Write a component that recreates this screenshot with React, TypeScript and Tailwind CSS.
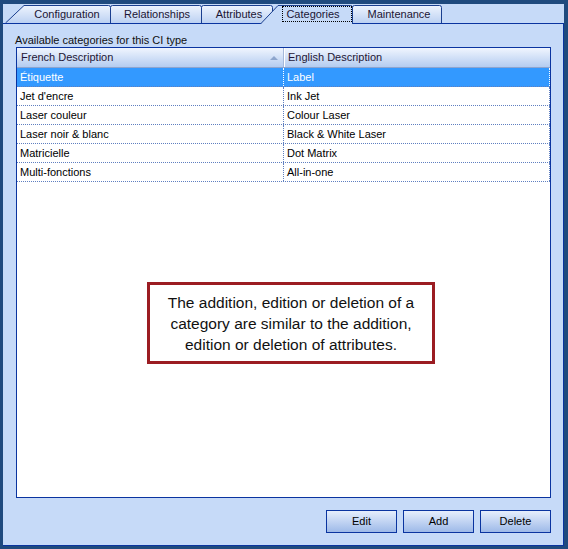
import React from "react";

type TabProps = {
    label: string;
    w: number;
    slant?: number;
    selected?: boolean;
    className?: string;
    labelClass?: string;
};

// tab shape is drawn, label stays as real text
function Tab({ label, w, slant = 0, selected = false, className = "", labelClass = "" }: TabProps) {
    const gid = `tabg-${label}`;
    const bottom = selected ? 20 : 19;
    const left = slant
        ? `M0.5 ${bottom} L${slant} 1.5`
        : `M0.5 ${bottom} V3.5 Q0.5 1.5 2.5 1.5`;
    const d = `${left} H${w - 2.5} Q${w - 0.5} 1.5 ${w - 0.5} 3.5 V${bottom}`;

    return (
        <div className={`relative h-[19px] shrink-0 ${selected ? "z-10" : ""} ${className}`}>
            <svg className="absolute left-0 top-0 overflow-visible" width={w} height={19} viewBox={`0 0 ${w} 19`}>
                <defs>
                    <linearGradient id={gid} x1="0" y1="0" x2="0" y2="1">
                        <stop offset="0" stopColor="#eef4fe" />
                        <stop offset="1" stopColor="#bcd1f2" />
                    </linearGradient>
                </defs>
                <path d={d} fill={selected ? "#c6daf8" : `url(#${gid})`} stroke="#1a3f8f" strokeWidth="1" />
            </svg>
            <div className={`relative flex h-full items-center justify-center pt-[2px] text-[11px] text-[#1b1535] ${labelClass}`}>
                {label}
            </div>
            {selected && (
                <div className="absolute left-[22px] right-[1px] top-[2px] bottom-[1px] border border-dotted border-black" />
            )}
        </div>
    );
}

const rows = [
    { fr: "Étiquette", en: "Label" },
    { fr: "Jet d'encre", en: "Ink Jet" },
    { fr: "Laser couleur", en: "Colour Laser" },
    { fr: "Laser noir & blanc", en: "Black & White Laser" },
    { fr: "Matricielle", en: "Dot Matrix" },
    { fr: "Multi-fonctions", en: "All-in-one" },
];

function Button({ children }: { children: React.ReactNode }) {
    return (
        <button className="flex h-[23px] w-[71px] items-center justify-center border border-[#0a34a0] bg-gradient-to-b from-[#e6eefc] to-[#9ebae8] text-[11px] text-black">
            {children}
        </button>
    );
}

export default function App() {
    return (
        <div
            className="flex h-[549px] w-[568px] flex-col bg-[#1f4a7e] pt-[4px] pr-[4px] pb-[3px] pl-[3px]"
            style={{ fontFamily: '"Liberation Sans", Arial, sans-serif' }}
        >
            {/* Tab strip */}
            <div className="relative z-10 flex h-[19px] items-end bg-[#c6daf8] pl-[2px]">
                <Tab label="Configuration" w={106} slant={19} className="w-[106px]" labelClass="pl-[18px]" />
                <Tab label="Relationships" w={92} className="-ml-px w-[92px]" labelClass="pl-[2px]" />
                <Tab label="Attributes" w={72} className="-ml-px w-[72px]" labelClass="pl-[4px]" />
                <Tab label="Categories" w={93} slant={18} selected className="-ml-[13px] w-[93px]" labelClass="pl-[13px]" />
                <Tab label="Maintenance" w={90} className="-ml-px w-[90px]" labelClass="pl-[4px]" />
            </div>

            {/* Tab page */}
            <div className="flex flex-1 flex-col border-t border-r border-b border-[#0a34a0] bg-[#c6daf8] pt-[9px] pb-[12px]">
                <div className="ml-[12px] h-[14px] text-[11px] leading-[14px] text-[#111]">
                    Available categories for this CI type
                </div>

                <div className="relative ml-[13px] mr-[12px] h-[451px] border border-[#0a34a0] bg-white">
                    {/* Header */}
                    <div className="flex h-[20px] border-b border-[#8da4cf] bg-gradient-to-b from-[#f0f5fe] to-[#b4ccf0] text-[11px] text-[#231535]">
                        <div className="relative flex w-[267px] items-center border-r border-[#a5b8da] pl-[4px]">
                            French Description
                            <svg className="absolute right-[5px] top-[8px]" width="8" height="4" viewBox="0 0 8 4">
                                <path d="M0 4 L4 0 L8 4 Z" fill="#8ea6cd" />
                            </svg>
                        </div>
                        <div className="flex w-[266px] items-center border-l border-white pl-[3px]">
                            English Description
                        </div>
                    </div>

                    {/* Rows */}
                    {rows.map((r, i) => {
                        const sel = i === 0;
                        return (
                            <div
                                key={r.fr}
                                className={`flex h-[19px] border-b border-dotted border-[#5f7fc0] text-[11px] ${sel ? "bg-[#3399ff] text-white" : "text-black"}`}
                            >
                                <div className={`flex w-[267px] items-center border-r border-dotted pl-[3px] ${sel ? "border-white" : "border-[#5f7fc0]"}`}>
                                    {r.fr}
                                </div>
                                <div className={`flex w-[266px] items-center border-r border-dotted pl-[3px] ${sel ? "border-white" : "border-[#5f7fc0]"}`}>
                                    {r.en}
                                </div>
                            </div>
                        );
                    })}

                    {/* Annotation callout */}
                    <div className="absolute left-[130px] top-[234px] flex h-[82px] w-[288px] items-center justify-center border-[3px] border-[#9b1c22] bg-white">
                        <p className="text-center text-[15.5px] leading-[21px] text-[#111]">
                            The addition, edition or deletion of a
                            <br />
                            category are similar to the addition,
                            <br />
                            edition or deletion of attributes.
                        </p>
                    </div>
                </div>

                <div className="mr-[12px] mt-[12px] flex justify-end gap-[6px]">
                    <Button>Edit</Button>
                    <Button>Add</Button>
                    <Button>Delete</Button>
                </div>
            </div>
        </div>
    );
}
